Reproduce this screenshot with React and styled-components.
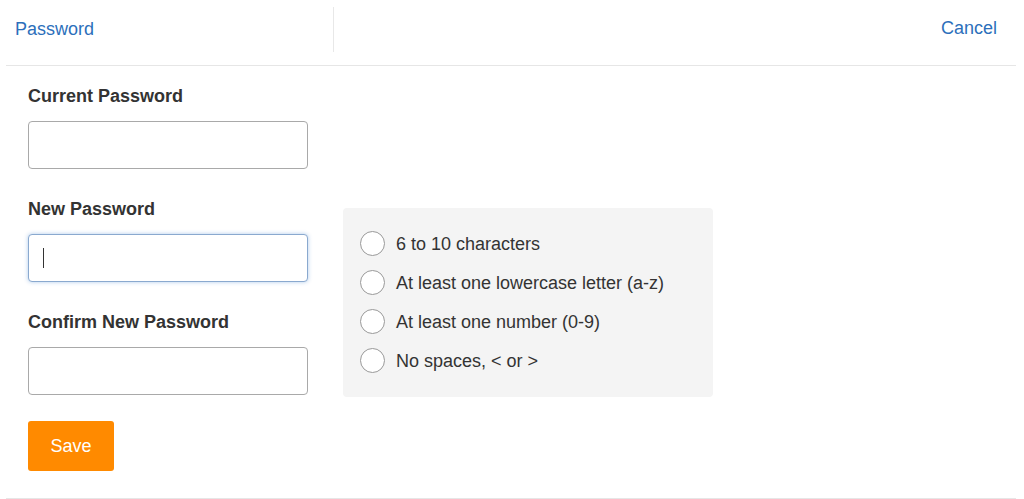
import React from "react";
import styled, { createGlobalStyle } from "styled-components";

const GlobalStyle = createGlobalStyle`
  html, body {
    margin: 0;
    padding: 0;
    background: #fff;
    font-family: "Liberation Sans", Arial, sans-serif;
  }
`;

const rules = [
  "6 to 10 characters",
  "At least one lowercase letter (a-z)",
  "At least one number (0-9)",
  "No spaces, < or >",
];

export default function App() {
  return (
    <Page>
      <GlobalStyle />
      <Header>
        <TabSide>
          <HeaderLink>Password</HeaderLink>
        </TabSide>
        <HeaderLink>Cancel</HeaderLink>
      </Header>

      <Body>
        <Form>
          <Field>
            <Label>Current Password</Label>
            <Input />
          </Field>
          <Field>
            <Label>New Password</Label>
            <Input focused>
              <Caret />
            </Input>
          </Field>
          <Field>
            <Label>Confirm New Password</Label>
            <Input />
          </Field>
          <SaveButton>Save</SaveButton>
        </Form>

        <Rules>
          {rules.map((r) => (
            <Rule key={r}>
              <Circle />
              <span>{r}</span>
            </Rule>
          ))}
        </Rules>
      </Body>
      <BottomLine />
    </Page>
  );
}

// Styled Components

const Page = styled.div`
  display: flex;
  flex-direction: column;
  width: 1024px;
  height: 499px;
  overflow: hidden;
`;

const Header = styled.div`
  display: flex;
  align-items: flex-start;
  justify-content: space-between;
  height: 66px;
  flex-shrink: 0;
  box-sizing: border-box;
  margin: 0 8px 0 6px;
  padding: 7px 19px 0 0;
  border-bottom: 1px solid #e6e6e6;
`;

const TabSide = styled.div`
  display: flex;
  align-items: center;
  width: 328px;
  height: 45px;
  padding-left: 9px;
  box-sizing: border-box;
  border-right: 1px solid #e8e8e8;
`;

const HeaderLink = styled.a`
  display: flex;
  align-items: center;
  height: 42px;
  color: #2c6fbb;
  font-size: 18px;
  cursor: pointer;
`;

const Body = styled.div`
  display: flex;
  align-items: flex-start;
  gap: 35px;
  flex: 1;
  padding: 20px 0 0 28px;
  box-sizing: border-box;
`;

const Form = styled.div`
  display: flex;
  flex-direction: column;
  width: 280px;
`;

const Field = styled.div`
  display: flex;
  flex-direction: column;
  margin-bottom: 30px;
`;

const Label = styled.label`
  font-size: 18px;
  font-weight: bold;
  color: #333;
  line-height: 20px;
  margin-bottom: 15px;
`;

const Input = styled.div`
  display: flex;
  align-items: center;
  height: 48px;
  box-sizing: border-box;
  border: 1px solid ${(p) => (p.focused ? "#8aa9cf" : "#a9a9a9")};
  border-radius: 4px;
  padding-left: 14px;
  box-shadow: ${(p) => (p.focused ? "0 0 4px rgba(80, 140, 210, 0.45)" : "none")};
  background: #fff;
`;

const Caret = styled.span`
  width: 1px;
  height: 20px;
  background: #333;
`;

const SaveButton = styled.button`
  width: 86px;
  height: 50px;
  margin-top: -4px;
  border: none;
  border-radius: 3px;
  background: #ff8a00;
  color: #fff;
  font-family: "Liberation Sans", Arial, sans-serif;
  font-size: 18px;
  cursor: pointer;
`;

const Rules = styled.div`
  display: flex;
  flex-direction: column;
  gap: 14px;
  width: 370px;
  margin-top: 122px;
  padding: 23px 0 24px 17px;
  box-sizing: border-box;
  background: #f4f4f4;
  border-radius: 4px;
`;

const Rule = styled.div`
  display: flex;
  align-items: center;
  gap: 11px;
  font-size: 18px;
  color: #333;
  line-height: 24px;
`;

const Circle = styled.span`
  width: 23px;
  height: 23px;
  border: 1px solid #999;
  border-radius: 50%;
  background: #fff;
`;

const BottomLine = styled.div`
  flex-shrink: 0;
  margin: 0 8px 0 6px;
  border-top: 1px solid #e6e6e6;
`;
